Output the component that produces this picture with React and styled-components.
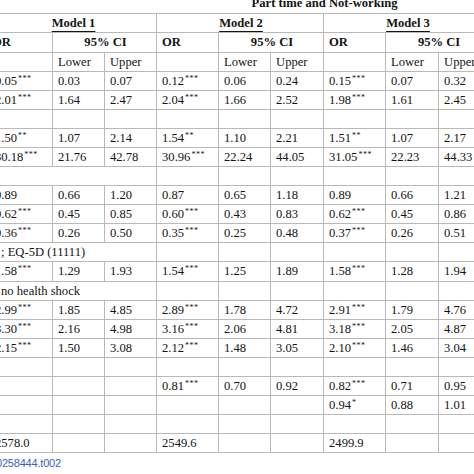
import React from "react";
import styled, { createGlobalStyle } from "styled-components";

const Global = createGlobalStyle`
  html, body { margin: 0; padding: 0; background: #ffffff; }
  body { width: 474px; height: 474px; overflow: hidden; }
`;

const Page = styled.div`
  width: 474px;
  height: 474px;
  overflow: hidden;
  background: #ffffff;
  font-family: "Liberation Serif", "Times New Roman", serif;
  color: #141414;
`;

const Table = styled.table`
  border-collapse: collapse;
  table-layout: fixed;
  width: 502px;
  margin: -6px 0 0 -12px;
`;

const Row = styled.tr`
  height: ${(p) => p.$h || 19.1}px;
`;

const Cell = styled.td`
  border: 1px solid #b9b9b9;
  padding: 0 3px 0 5px;
  font-size: 12.6px;
  line-height: 14px;
  white-space: nowrap;
  overflow: visible;
  vertical-align: middle;
  text-align: ${(p) => (p.$center ? "center" : "left")};
  font-weight: ${(p) => (p.$bold ? 700 : 400)};
`;

const FirstCell = styled(Cell)`
  padding-left: ${(p) => (p.$bold ? 3 : 6)}px;
`;

const LabelCell = styled(Cell)`
  padding-left: 12px;
`;

const TitleCell = styled(Cell)`
  border-top: none;
  border-left: none;
  border-right: none;
  text-align: center;
  font-weight: 700;
`;

const ModelLabel = styled.span`
  text-decoration: underline;
  text-decoration-thickness: 1px;
  text-underline-offset: 4px;
`;

const Stars = styled.sup`
  font-size: 8px;
  line-height: 0;
  vertical-align: 4px;
  margin-left: 1px;
  letter-spacing: 0.5px;
`;

const Caption = styled.div`
  margin: 4px 0 0 -4px;
  font-family: "Liberation Sans", Arial, sans-serif;
  font-size: 11px;
  line-height: 13px;
  letter-spacing: -0.2px;
  color: #3d5cc4;
`;

const rows = [
  ["0.05***", "0.03", "0.07", "0.12***", "0.06", "0.24", "0.15***", "0.07", "0.32"],
  ["2.01***", "1.64", "2.47", "2.04***", "1.66", "2.52", "1.98***", "1.61", "2.45"],
  ["", "", "", "", "", "", "", "", ""],
  ["1.50**", "1.07", "2.14", "1.54**", "1.10", "2.21", "1.51**", "1.07", "2.17"],
  ["30.18***", "21.76", "42.78", "30.96***", "22.24", "44.05", "31.05***", "22.23", "44.33"],
  { label: "" },
  ["0.89", "0.66", "1.20", "0.87", "0.65", "1.18", "0.89", "0.66", "1.21"],
  ["0.62***", "0.45", "0.85", "0.60***", "0.43", "0.83", "0.62***", "0.45", "0.86"],
  ["0.36***", "0.26", "0.50", "0.35***", "0.25", "0.48", "0.37***", "0.26", "0.51"],
  { label: "; EQ-5D (11111)" },
  ["1.58***", "1.29", "1.93", "1.54***", "1.25", "1.89", "1.58***", "1.28", "1.94"],
  { label: "no health shock" },
  ["2.99***", "1.85", "4.85", "2.89***", "1.78", "4.72", "2.91***", "1.79", "4.76"],
  ["3.30***", "2.16", "4.98", "3.16***", "2.06", "4.81", "3.18***", "2.05", "4.87"],
  ["2.15***", "1.50", "3.08", "2.12***", "1.48", "3.05", "2.10***", "1.46", "3.04"],
  ["", "", "", "", "", "", "", "", ""],
  ["", "", "", "0.81***", "0.70", "0.92", "0.82***", "0.71", "0.95"],
  ["", "", "", "", "", "", "0.94*", "0.88", "1.01"],
  ["", "", "", "", "", "", "", "", ""],
  ["2578.0", "", "", "2549.6", "", "", "2499.9", "", ""],
];

const colWidths = [64, 52, 52, 62, 52, 53, 62, 53, 52];

function Value({ text }) {
  const m = text.match(/^([^*]*)(\*+)$/);
  if (!m) return <>{text}</>;
  return (
    <>
      {m[1]}
      <Stars>{m[2]}</Stars>
    </>
  );
}

export default function App() {
  return (
    <Page>
      <Global />
      <Table>
        <colgroup>
          {colWidths.map((w, i) => (
            <col key={i} style={{ width: w }} />
          ))}
        </colgroup>
        <tbody>
          <Row $h={19}>
            <TitleCell colSpan={3} />
            <TitleCell colSpan={6}>Part time and Not-working</TitleCell>
          </Row>
          <Row $h={19}>
            {["Model 1", "Model 2", "Model 3"].map((m) => (
              <Cell key={m} colSpan={3} $center $bold>
                <ModelLabel>{m}</ModelLabel>
              </Cell>
            ))}
          </Row>
          <Row $h={20}>
            {[0, 1, 2].map((i) => (
              <React.Fragment key={i}>
                {i === 0 ? <FirstCell $bold>OR</FirstCell> : <Cell $bold>OR</Cell>}
                <Cell colSpan={2} $center $bold>
                  95% CI
                </Cell>
              </React.Fragment>
            ))}
          </Row>
          <Row $h={19}>
            {[0, 1, 2].map((i) => (
              <React.Fragment key={i}>
                <Cell />
                <Cell>Lower</Cell>
                <Cell>Upper</Cell>
              </React.Fragment>
            ))}
          </Row>
          {rows.map((r, ri) =>
            Array.isArray(r) ? (
              <Row key={ri}>
                {r.map((v, ci) =>
                  ci === 0 ? (
                    <FirstCell key={ci}>
                      <Value text={v} />
                    </FirstCell>
                  ) : (
                    <Cell key={ci}>
                      <Value text={v} />
                    </Cell>
                  )
                )}
              </Row>
            ) : (
              <Row key={ri}>
                <LabelCell colSpan={3}>{r.label}</LabelCell>
                {[0, 1, 2, 3, 4, 5].map((ci) => (
                  <Cell key={ci} />
                ))}
              </Row>
            )
          )}
        </tbody>
      </Table>
      <Caption>0258444.t002</Caption>
    </Page>
  );
}
